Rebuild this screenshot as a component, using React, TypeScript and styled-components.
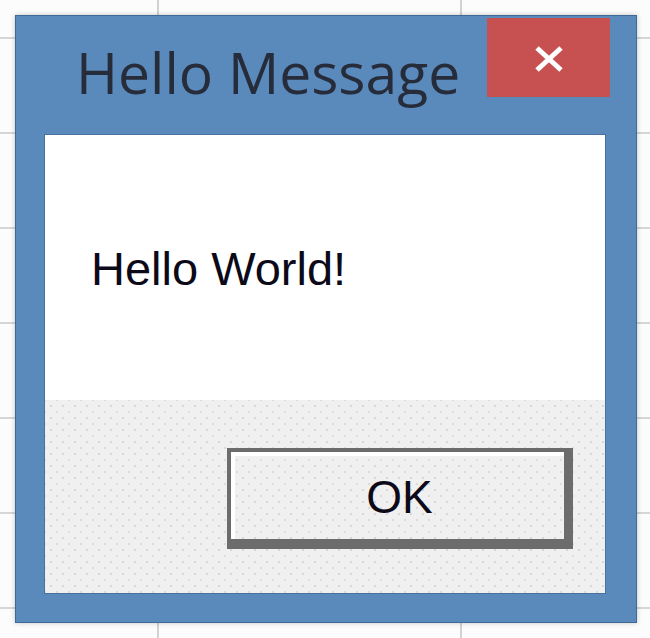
import styled, { createGlobalStyle } from "styled-components";

const GlobalStyle = createGlobalStyle`
  html, body {
    margin: 0;
    padding: 0;
    background: #fcfcfc;
  }
`;

const App = () => {
  return (
    <>
      <GlobalStyle />
      <Sheet>
        <Dialog>
          <TitleBar>
            <Title>Hello Message</Title>
            <CloseButton aria-label="Close">
              <svg width="34" height="28" viewBox="0 0 34 28">
                <path
                  d="M5 3 L29 25 M29 3 L5 25"
                  stroke="#fff"
                  strokeWidth="5"
                  fill="none"
                />
              </svg>
            </CloseButton>
          </TitleBar>
          <Client>
            <MessageArea>
              <Message>Hello World!</Message>
            </MessageArea>
            <ButtonArea>
              <OkButton>OK</OkButton>
            </ButtonArea>
          </Client>
        </Dialog>
      </Sheet>
    </>
  );
};

export default App;

const Sheet = styled.div`
  width: 650px;
  height: 638px;
  box-sizing: border-box;
  padding: 15px 13px 15px 15px;
  background-color: #fcfcfc;
  background-image: linear-gradient(to right, #d2d2d2 2px, transparent 2px),
    linear-gradient(to bottom, #d6d6d6 2px, transparent 2px);
  background-size: 303px 100%, 100% 95px;
  background-position: 157px 0, 0 37px;
  overflow: hidden;
`;

const Dialog = styled.div`
  height: 100%;
  box-sizing: border-box;
  display: flex;
  flex-direction: column;
  background: #5a89bb;
  border: 1px solid #3f6a98;
  box-shadow: 0 0 5px rgba(0, 0, 0, 0.22);
  padding: 0 31px 29px 29px;
`;

const TitleBar = styled.div`
  height: 119px;
  flex-shrink: 0;
  display: flex;
  align-items: flex-start;
  justify-content: space-between;
  margin-right: -5px;
`;

const Title = styled.div`
  margin: 28px 0 0 31px;
  font-family: "Open Sans", "Noto Sans", sans-serif;
  font-size: 57px;
  line-height: 1;
  color: #262c3a;
  white-space: nowrap;
`;

const CloseButton = styled.div`
  margin-top: 2px;
  width: 123px;
  height: 79px;
  background: #c75050;
  display: flex;
  align-items: center;
  justify-content: center;
  padding-top: 2px;
  box-sizing: border-box;
`;

const Client = styled.div`
  flex: 1;
  display: flex;
  flex-direction: column;
  box-shadow: 0 0 0 1px rgba(50, 85, 125, 0.45);
`;

const MessageArea = styled.div`
  height: 265px;
  flex-shrink: 0;
  background: #ffffff;
  box-sizing: border-box;
  padding: 110px 0 0 46px;
`;

const Message = styled.div`
  font-family: "Liberation Sans", Arial, sans-serif;
  font-size: 47px;
  line-height: 1;
  color: #0c0a18;
`;

const ButtonArea = styled.div`
  flex: 1;
  display: flex;
  justify-content: flex-end;
  align-items: flex-start;
  padding: 48px 32px 0 0;
  background-color: #f0f0f0;
  background-image: radial-gradient(circle, #d9d9d9 1px, transparent 1.6px),
    radial-gradient(circle, #dcdcdc 1px, transparent 1.6px);
  background-size: 12px 12px, 12px 12px;
  background-position: 0 0, 6px 6px;
`;

const OkButton = styled.div`
  width: 346px;
  height: 101px;
  box-sizing: border-box;
  display: flex;
  align-items: center;
  justify-content: center;
  background: transparent;
  border: 4px solid #6c6c6c;
  border-right-width: 9px;
  border-bottom-width: 10px;
  box-shadow: inset 4px 4px 0 #ffffff;
  font-family: "Liberation Sans", Arial, sans-serif;
  font-size: 46px;
  line-height: 1;
  color: #0c0a18;
  padding: 3px 0 0 4px;
`;
